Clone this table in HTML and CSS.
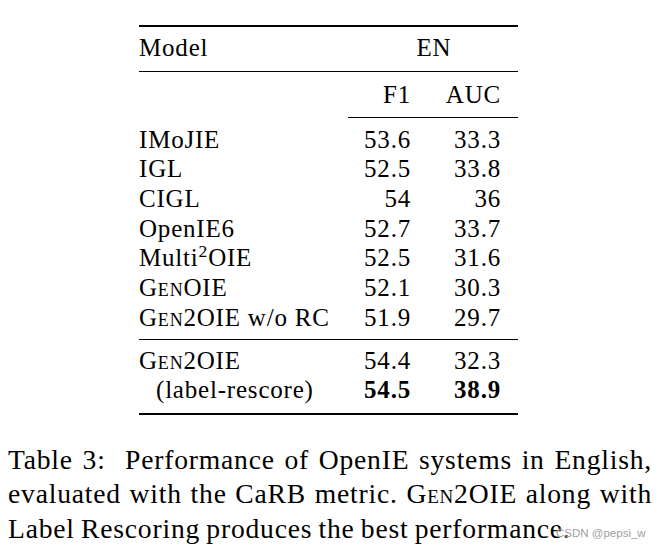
FILE: index.html
```html
<!DOCTYPE html>
<html lang="en">
<head>
<meta charset="utf-8">
<title>Table 3</title>
<link rel="stylesheet" href="styles.css">
</head>
<body>
<div class="figure">
  <table class="results">
    <colgroup>
      <col class="col-model">
      <col class="col-f1">
      <col class="col-auc">
    </colgroup>
    <thead>
      <tr class="row-head">
        <th class="c-model">Model</th>
        <th class="c-en" colspan="2">EN</th>
      </tr>
      <tr class="row-sub">
        <th class="c-model"></th>
        <th class="c-num">F1</th>
        <th class="c-num">AUC</th>
      </tr>
    </thead>
    <tbody class="group-a">
      <tr class="first"><td class="c-model">IMoJIE</td><td class="c-num">53.6</td><td class="c-num">33.3</td></tr>
      <tr><td class="c-model">IGL</td><td class="c-num">52.5</td><td class="c-num">33.8</td></tr>
      <tr><td class="c-model">CIGL</td><td class="c-num">54</td><td class="c-num">36</td></tr>
      <tr><td class="c-model">OpenIE6</td><td class="c-num">52.7</td><td class="c-num">33.7</td></tr>
      <tr><td class="c-model">Multi<sup class="sup">2</sup>OIE</td><td class="c-num">52.5</td><td class="c-num">31.6</td></tr>
      <tr><td class="c-model"><span class="sc">Gen</span>OIE</td><td class="c-num">52.1</td><td class="c-num">30.3</td></tr>
      <tr class="last"><td class="c-model"><span class="sc">Gen</span>2OIE w/o RC</td><td class="c-num">51.9</td><td class="c-num">29.7</td></tr>
    </tbody>
    <tbody class="group-b">
      <tr class="first"><td class="c-model"><span class="sc">Gen</span>2OIE</td><td class="c-num">54.4</td><td class="c-num">32.3</td></tr>
      <tr class="last"><td class="c-model indent">(label-rescore)</td><td class="c-num best">54.5</td><td class="c-num best">38.9</td></tr>
    </tbody>
  </table>
  <p class="caption">Table 3:&nbsp; Performance of OpenIE systems in English, evaluated with the CaRB metric. <span class="sc">Gen</span>2OIE along with Label Rescoring produces the best performance.</p>
  <span class="watermark">CSDN @pepsi_w</span>
</div>
</body>
</html>
```
FILE: styles.css
```css
html, body {
  margin: 0;
  padding: 0;
  background: #ffffff;
}

body {
  color: #000000;
  font-family: "Liberation Serif", "Times New Roman", serif;
}

.figure {
  position: relative;
  width: 661px;
  height: 551px;
  padding: 25px 0 0 0;
  box-sizing: border-box;
}

.results {
  table-layout: fixed;
  border-collapse: separate;
  border-spacing: 0;
  margin-left: 139px;
  width: 379px;
  font-size: 25px;
  line-height: 29.7px;
  letter-spacing: 0.8px;
}

.col-model { width: 209px; }
.col-f1 { width: 80px; }
.col-auc { width: 90px; }

.results th,
.results td {
  padding: 0;
  font-weight: normal;
  white-space: nowrap;
  vertical-align: top;
}

.results .c-model {
  text-align: left;
}

.results .c-num {
  text-align: right;
  padding-right: 17px;
}

.results .c-en {
  text-align: center;
}

/* header row: top rule + mid rule */
.results .row-head th {
  border-top: 2px solid #000;
  border-bottom: 1px solid #000;
  padding-top: 5.7px;
  padding-bottom: 8.6px;
}

.results .row-head th.c-en {
  padding-left: 2px;
}

/* F1 / AUC row with partial rule */
.results .row-sub th {
  border-bottom: 1px solid transparent;
  padding-top: 7.7px;
  padding-bottom: 7.6px;
}

.results .row-sub th.c-num {
  border-bottom-color: #000;
}

.results .group-a tr.first td {
  padding-top: 6.7px;
}

.results .group-a tr.last td {
  padding-bottom: 6.4px;
  border-bottom: 1px solid #000;
}

.results .group-b tr.first td {
  padding-top: 5.7px;
}

.results .group-b tr.last td {
  padding-bottom: 7.9px;
  border-bottom: 2px solid #000;
}

.sup {
  font-size: 17.5px;
  line-height: 0;
  vertical-align: 9.5px;
}

.sc {
  font-variant: small-caps;
}

.results .indent {
  padding-left: 17px;
}

.results .best {
  font-weight: bold;
}

.caption {
  margin: 28px 0 0 8px;
  width: 644px;
  font-size: 27.6px;
  line-height: 34.4px;
  letter-spacing: 0.8px;
  word-spacing: -1.5px;
  text-align: justify;
}

.watermark {
  position: absolute;
  left: 556px;
  top: 526px;
  font-family: "Liberation Sans", Arial, sans-serif;
  font-size: 11.5px;
  line-height: 14px;
  color: rgba(150, 150, 150, 0.95);
  text-shadow: 0 0 2px rgba(255, 255, 255, 0.9);
}
```
